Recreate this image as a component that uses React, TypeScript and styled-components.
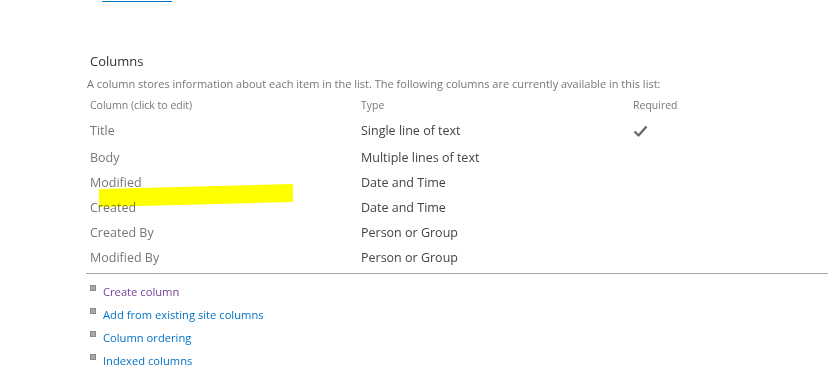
import styled, { createGlobalStyle } from "styled-components";

const GlobalStyle = createGlobalStyle`
  body {
    margin: 0;
    background: #fff;
    font-family: "Segoe UI", "Open Sans", sans-serif;
  }
`;

type Column = {
  name: string;
  type: string;
  required?: boolean;
};

const columns: Column[] = [
  { name: "Title", type: "Single line of text", required: true },
  { name: "Body", type: "Multiple lines of text" },
  { name: "Modified", type: "Date and Time" },
  { name: "Created", type: "Date and Time" },
  { name: "Created By", type: "Person or Group" },
  { name: "Modified By", type: "Person or Group" },
];

const links = [
  { label: "Create column", visited: true },
  { label: "Add from existing site columns" },
  { label: "Column ordering" },
  { label: "Indexed columns" },
];

export default function App() {
  return (
    <>
      <GlobalStyle />
      <Page>
        <TopLink />
        <Section>
          <Heading>Columns</Heading>
          <Description>
            A column stores information about each item in the list. The following columns are
            currently available in this list:
          </Description>
          <Table>
            <HeaderRow>
              <HeaderCell>Column (click to edit)</HeaderCell>
              <HeaderCell>Type</HeaderCell>
              <HeaderCell>Required</HeaderCell>
            </HeaderRow>
            {columns.map((col, i) => (
              <Row key={col.name} $first={i === 0}>
                <NameCell>{col.name}</NameCell>
                <TypeCell>{col.type}</TypeCell>
                <RequiredCell>
                  {col.required && (
                    <svg width="15" height="12" viewBox="0 0 15 12">
                      <path
                        d="M1.5 6.5 L5.5 10.5 L13.5 1.5"
                        fill="none"
                        stroke="#6a6a6a"
                        strokeWidth="2.4"
                        strokeLinejoin="round"
                      />
                    </svg>
                  )}
                </RequiredCell>
              </Row>
            ))}
          </Table>
          <Divider />
          <LinkList>
            {links.map((l) => (
              <LinkItem key={l.label}>
                <Bullet />
                <ActionLink href="#" $visited={l.visited}>
                  {l.label}
                </ActionLink>
              </LinkItem>
            ))}
          </LinkList>
        </Section>
        <Highlight width="828" height="379" viewBox="0 0 828 379">
          <polygon points="99,189 293,184 293,202 99,207" fill="#ffff00" />
        </Highlight>
      </Page>
    </>
  );
}

const Page = styled.div`
  position: relative;
  width: 828px;
  height: 379px;
  overflow: hidden;
`;

const TopLink = styled.div`
  margin-left: 102px;
  width: 70px;
  height: 1px;
  margin-top: 1px;
  background: #0072c6;
`;

const Section = styled.div`
  padding-left: 86px;
  padding-top: 50px;
`;

const Heading = styled.div`
  padding-left: 4px;
  font-size: 13px;
  color: #333;
  line-height: 18px;
`;

const Description = styled.div`
  margin-top: 6px;
  padding-left: 1px;
  font-size: 11px;
  color: #777;
  line-height: 16px;
  white-space: nowrap;
`;

const Table = styled.div`
  margin-top: 6px;
  display: flex;
  flex-direction: column;
  width: 742px;
`;

const HeaderRow = styled.div`
  display: grid;
  grid-template-columns: 271px 272px 1fr;
  padding-left: 4px;
  height: 14px;
  align-items: center;
`;

const HeaderCell = styled.div`
  font-size: 10.5px;
  color: #777;
`;

const Row = styled.div<{ $first: boolean }>`
  display: grid;
  grid-template-columns: 271px 272px 1fr;
  padding-left: 4px;
  height: 25px;
  margin-top: ${({ $first }) => ($first ? "6px" : "0")};
  margin-bottom: ${({ $first }) => ($first ? "2px" : "0")};
  align-items: center;
  font-size: 12.5px;
`;

const NameCell = styled.div`
  color: #777;
`;

const TypeCell = styled.div`
  color: #444;
`;

const RequiredCell = styled.div`
  display: flex;
  align-items: center;
`;

const Divider = styled.div`
  margin-top: 3px;
  height: 1px;
  background: #a6a6a6;
`;

const LinkList = styled.ul`
  list-style: none;
  margin: 9px 0 0;
  padding: 0 0 0 4px;
  display: flex;
  flex-direction: column;
  gap: 7px;
`;

const LinkItem = styled.li`
  display: flex;
  align-items: center;
  gap: 7px;
  height: 16px;
`;

const Bullet = styled.span`
  width: 4px;
  height: 4px;
  margin-top: -6px;
  background: #a8a8a8;
  border: 1px solid #8a8a8a;
`;

const ActionLink = styled.a<{ $visited?: boolean }>`
  font-size: 11.2px;
  color: ${({ $visited }) => ($visited ? "#75409a" : "#0072c6")};
  text-decoration: none;
`;

const Highlight = styled.svg`
  position: absolute;
  left: 0;
  top: 0;
  pointer-events: none;
  mix-blend-mode: multiply;
`;
